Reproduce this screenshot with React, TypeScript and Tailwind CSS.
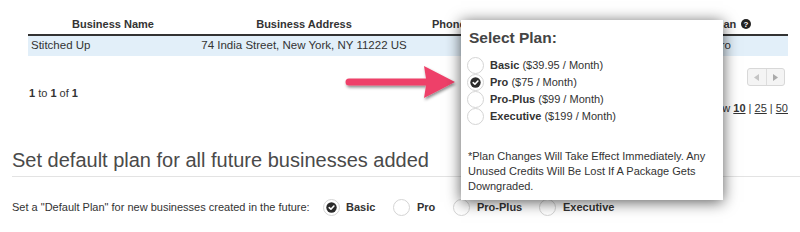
import React from "react";

function Radio({ checked = false }: { checked?: boolean }) {
    if (checked) {
        return (
            <svg width="17" height="17" viewBox="0 0 17 17" className="shrink-0">
                <circle cx="8.5" cy="8.5" r="8" fill="#fff" stroke="#d4d4d4" />
                <circle cx="8.5" cy="8.5" r="5.2" fill="#2b2b2b" />
                <path d="M6.2 8.7 L7.9 10.2 L10.9 7" fill="none" stroke="#fff" strokeWidth="1.6" strokeLinecap="round" strokeLinejoin="round" />
            </svg>
        );
    }
    return (
        <svg width="17" height="17" viewBox="0 0 17 17" className="shrink-0">
            <circle cx="8.5" cy="8.5" r="8" fill="#fff" stroke="#d4d4d4" />
        </svg>
    );
}

const plans = [
    { name: "Basic", price: "($39.95 / Month)" },
    { name: "Pro", price: "($75 / Month)", checked: true },
    { name: "Pro-Plus", price: "($99 / Month)" },
    { name: "Executive", price: "($199 / Month)" },
];

export default function App() {
    return (
        <div className="relative w-[800px] h-[232px] overflow-hidden bg-white text-[#333] font-['Liberation_Sans',Arial,sans-serif]">
            {/* Businesses table */}
            <div className="ml-[28px] mr-[12px] pt-[14px]">
                <div className="grid grid-cols-[170px_212px_1fr_84px] text-[11px] font-bold border-b-2 border-[#333] h-[22px] items-center">
                    <div className="text-center">Business Name</div>
                    <div className="text-center">Business Address</div>
                    <div className="pl-[22px]">Phone</div>
                    <div className="flex items-center gap-[5px] pl-[9px]">
                        Plan
                        <svg width="10" height="10" viewBox="0 0 10 10">
                            <circle cx="5" cy="5" r="5" fill="#222" />
                            <text x="5" y="8.3" textAnchor="middle" fontSize="8" fontWeight="bold" fill="#fff" fontFamily="Liberation Sans, Arial, sans-serif">?</text>
                        </svg>
                    </div>
                </div>
                <div className="grid grid-cols-[170px_212px_1fr_84px] text-[11.5px] bg-[#e2eff9] h-[20px] items-center">
                    <div className="pl-[3px]">Stitched Up</div>
                    <div className="text-center whitespace-nowrap">74 India Street, New York, NY 11222 US</div>
                    <div></div>
                    <div className="pl-[9px]">Pro</div>
                </div>

                {/* Pagination */}
                <div className="flex justify-between items-start mt-[12px] h-[50px]">
                    <div className="text-[11px] pl-px pt-[17px]">
                        <b>1</b> to <b>1</b> of <b>1</b>
                    </div>
                    <div className="flex flex-col items-end">
                        <div className="flex w-[38px] h-[18px] mr-[3px] rounded-[3px] border border-[#d8d8d8] bg-[#f4f4f4]">
                            <div className="flex-1 flex items-center justify-center border-r border-[#ddd]">
                                <svg width="5" height="7" viewBox="0 0 5 7"><path d="M5 0 L0 3.5 L5 7 Z" fill="#c4c4c4" /></svg>
                            </div>
                            <div className="flex-1 flex items-center justify-center">
                                <svg width="5" height="7" viewBox="0 0 5 7"><path d="M0 0 L5 3.5 L0 7 Z" fill="#aaa" /></svg>
                            </div>
                        </div>
                        <div className="text-[11px] mt-[14px] text-[#333]">
                            Show <span className="font-bold underline">10</span> | <span className="underline">25</span> | <span className="underline">50</span>
                        </div>
                    </div>
                </div>
            </div>

            {/* Default plan section */}
            <div className="ml-[12px] mt-[29px]">
                <h2 className="text-[20px] leading-[26px] text-[#4a4a4a] pb-[3px] border-b border-[#e3e3e3]">
                    Set default plan for all future businesses added
                </h2>
                <div className="flex items-center h-[20px] mt-[20px] text-[11px]">
                    <span className="w-[311px] whitespace-nowrap">Set a "Default Plan" for new businesses created in the future:</span>
                    <div className="flex items-center gap-[6px] w-[70px]">
                        <Radio checked />
                        <b>Basic</b>
                    </div>
                    <div className="flex items-center gap-[7px] w-[60px]">
                        <Radio />
                        <b>Pro</b>
                    </div>
                    <div className="flex items-center gap-[7px] w-[86px]">
                        <Radio />
                        <b>Pro-Plus</b>
                    </div>
                    <div className="flex items-center gap-[7px]">
                        <Radio />
                        <b>Executive</b>
                    </div>
                </div>
            </div>

            {/* Arrow annotation */}
            <svg className="absolute left-[340px] top-[60px]" width="122" height="46" viewBox="0 0 122 46">
                <defs>
                    <filter id="sh" x="-10%" y="-20%" width="130%" height="150%">
                        <feDropShadow dx="1" dy="2" stdDeviation="1.6" floodColor="#000" floodOpacity="0.45" />
                    </filter>
                </defs>
                <path
                    d="M9 18.5 L86 18.5 L84 6 L115 22 L84 38 L86 25.5 L9 25.5 Q5.5 25.5 5.5 22 Q5.5 18.5 9 18.5 Z"
                    fill="#ee4169"
                    filter="url(#sh)"
                />
            </svg>

            {/* Select plan popup */}
            <div className="absolute left-[461px] top-[20px] w-[262px] h-[180px] bg-white shadow-[0_2px_14px_rgba(0,0,0,0.65)] px-[7px] pt-[9px]">
                <div className="text-[15.5px] font-bold text-[#444] leading-[18px] pl-px">Select Plan:</div>
                <div className="mt-[10px] flex flex-col">
                    {plans.map((p) => (
                        <div key={p.name} className="flex items-center gap-[6px] h-[17px] text-[11px]">
                            <div className="-ml-px">
                                <Radio checked={p.checked} />
                            </div>
                            <span>
                                <b>{p.name}</b> {p.price}
                            </span>
                        </div>
                    ))}
                </div>
                <p className="mt-[24px] text-[11px] leading-[15px] text-[#333]">
                    *Plan Changes Will Take Effect Immediately. Any Unused Credits Will Be Lost If A Package Gets Downgraded.
                </p>
            </div>
        </div>
    );
}
